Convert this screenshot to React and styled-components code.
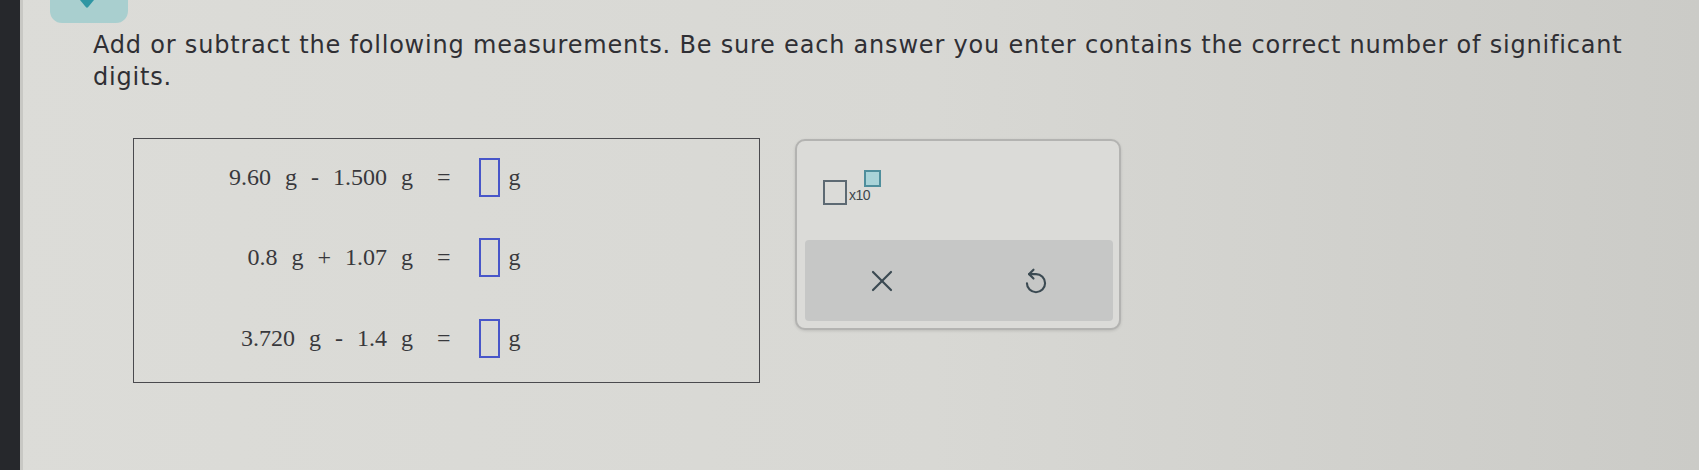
import React from 'react';
import styled, { createGlobalStyle } from 'styled-components';

const GlobalStyle = createGlobalStyle`
  html, body {
    margin: 0;
    padding: 0;
  }
  body {
    width: 1699px;
    height: 470px;
    overflow: hidden;
    background: linear-gradient(90deg, #dcdcd8 0%, #d8d8d4 55%, #cbcbc7 100%);
  }
`

const Screen = styled.div`
  display: flex;
  width: 1699px;
  height: 470px;
`
const Bezel = styled.div`
  width: 20px;
  flex-shrink: 0;
  background: #26282c;
  border-right: 3px solid #c8c8c4;
`
const Content = styled.div`
  flex: 1;
  display: flex;
  flex-direction: column;
`
const TopBar = styled.div`
  height: 23px;
  padding-left: 27px;
  display: flex;
`
const Badge = styled.div`
  width: 78px;
  height: 23px;
  border-radius: 0 0 12px 12px;
  background: #a9cfcf;
  display: flex;
  justify-content: center;
  align-items: flex-start;
`
const Title = styled.p`
  margin: 6px 0 0 70px;
  width: 1548px;
  font-family: "DejaVu Sans", Verdana, sans-serif;
  font-size: 24px;
  letter-spacing: 0.8px;
  line-height: 32px;
  color: #2f2f34;
`
const Workspace = styled.div`
  display: flex;
  align-items: flex-start;
  gap: 35px;
  margin: 45px 0 0 110px;
`
const Equations = styled.div`
  box-sizing: border-box;
  width: 627px;
  height: 245px;
  padding: 19px 0 24px;
  border: 1px solid #4a4a4e;
  display: flex;
  flex-direction: column;
  gap: 41px;
`
const Row = styled.div`
  height: 40px;
  display: flex;
  align-items: center;
  font-family: "Liberation Serif", "Times New Roman", serif;
  font-size: 24px;
  color: #38383c;
`
const Expression = styled.div`
  width: 279px;
  display: flex;
  justify-content: flex-end;
  gap: 14px;
`
const Equals = styled.span`
  margin-left: 24px;
`
const AnswerBox = styled.div`
  box-sizing: border-box;
  width: 21px;
  height: 39px;
  margin-left: 28px;
  border: 2px solid #4856c9;
`
const Unit = styled.span`
  margin-left: 9px;
`
const Keypad = styled.div`
  box-sizing: border-box;
  width: 326px;
  height: 191px;
  margin-top: 1px;
  padding: 0 6px 7px 8px;
  border: 2px solid #b3b3b1;
  border-radius: 10px;
  background: #dbdbd8;
  box-shadow: 0 1px 3px rgba(0, 0, 0, 0.12);
  display: flex;
  flex-direction: column;
  justify-content: space-between;
`
const Notation = styled.div`
  display: flex;
  align-items: flex-start;
  margin: 29px 0 0 18px;
`
const BaseBox = styled.div`
  box-sizing: border-box;
  width: 24px;
  height: 25px;
  margin-top: 10px;
  border: 2px solid #5d6a73;
`
const Times = styled.span`
  margin: 18px 0 0 2px;
  font-family: "Liberation Sans", Arial, sans-serif;
  font-size: 14px;
  line-height: 14px;
  letter-spacing: -0.5px;
  color: #3d464c;
`
const SupBox = styled.div`
  box-sizing: border-box;
  width: 17px;
  height: 17px;
  margin-left: -6px;
  border: 2px solid #4f8e9c;
  background: #a9d3d8;
`
const ButtonBar = styled.div`
  height: 81px;
  border-radius: 4px;
  background: #c6c7c6;
  display: grid;
  grid-template-columns: 1fr 1fr;
  place-items: center;
`
const IconButton = styled.button`
  border: none;
  background: none;
  padding: 0;
  display: flex;
  color: #3b4a52;
`

const rows = [
  ['9.60', 'g', '-', '1.500', 'g'],
  ['0.8', 'g', '+', '1.07', 'g'],
  ['3.720', 'g', '-', '1.4', 'g'],
]

function App() {
  return (
    <Screen>
      <GlobalStyle />
      <Bezel />
      <Content>
        <TopBar>
          <Badge>
            <svg width="16" height="9" viewBox="0 0 16 9" style={{ marginLeft: '-4px' }}>
              <path d="M1 0 L15 0 L9.2 7 Q8 8.4 6.8 7 Z" fill="#2f96a3" />
            </svg>
          </Badge>
        </TopBar>
        <Title>
          Add or subtract the following measurements. Be sure each answer you enter contains the correct number of significant digits.
        </Title>
        <Workspace>
          <Equations>
            {rows.map((tokens, i) => (
              <Row key={i}>
                <Expression>
                  {tokens.map((t, j) => <span key={j}>{t}</span>)}
                </Expression>
                <Equals>=</Equals>
                <AnswerBox />
                <Unit>g</Unit>
              </Row>
            ))}
          </Equations>
          <Keypad>
            <Notation>
              <BaseBox />
              <Times>x10</Times>
              <SupBox />
            </Notation>
            <ButtonBar>
              <IconButton aria-label="clear">
                <svg width="22" height="22" viewBox="0 0 22 22" fill="none" stroke="currentColor" strokeWidth="2.2" strokeLinecap="round">
                  <path d="M2 2 L20 20" />
                  <path d="M20 2 L2 20" />
                </svg>
              </IconButton>
              <IconButton aria-label="undo">
                <svg width="30" height="30" viewBox="0 0 24 24" fill="none" stroke="currentColor" strokeWidth="1.7" strokeLinecap="round" strokeLinejoin="round">
                  <path d="M10 3 L6.5 6.5 L10 10" />
                  <path d="M6.5 6.5 H12 A7.25 7.25 0 1 1 4.75 13.75" />
                </svg>
              </IconButton>
            </ButtonBar>
          </Keypad>
        </Workspace>
      </Content>
    </Screen>
  )
}

export default App;
